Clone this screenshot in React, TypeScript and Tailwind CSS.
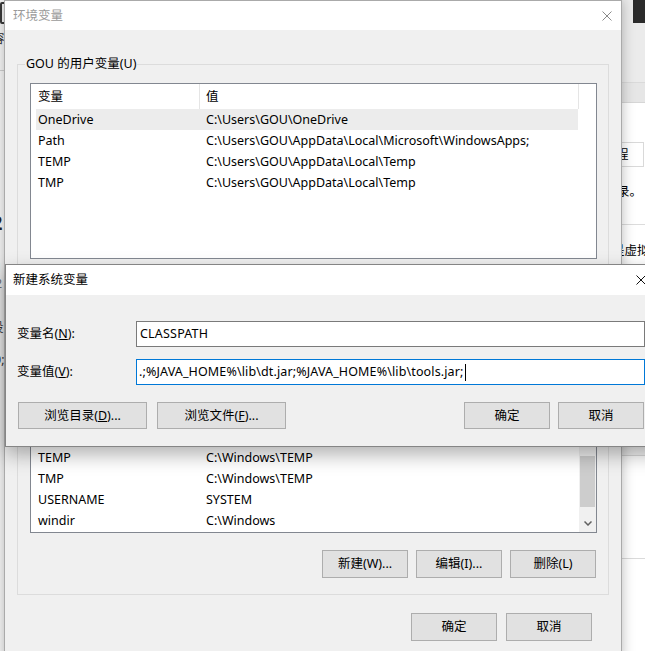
import type { ReactNode } from 'react'

// variable tables shown in the two list views
const userVars: [string, string][] = [
  ['OneDrive', 'C:\\Users\\GOU\\OneDrive'],
  ['Path', 'C:\\Users\\GOU\\AppData\\Local\\Microsoft\\WindowsApps;'],
  ['TEMP', 'C:\\Users\\GOU\\AppData\\Local\\Temp'],
  ['TMP', 'C:\\Users\\GOU\\AppData\\Local\\Temp'],
]

const systemVars: [string, string][] = [
  ['ComSpec', 'C:\\Windows\\system32\\cmd.exe'],
  ['DriverData', 'C:\\Windows\\System32\\Drivers\\DriverData'],
  ['NUMBER_OF_PROCESSORS', '8'],
  ['OS', 'Windows_NT'],
  ['Path', 'C:\\Windows\\system32;C:\\Windows;C:\\Windows\\System32\\Wbem;'],
  ['PATHEXT', '.COM;.EXE;.BAT;.CMD;.VBS;.VBE;.JS;.JSE;.WSF;.WSH;.MSC'],
  ['PROCESSOR_ARCHITECTURE', 'AMD64'],
  ['PSModulePath', '%ProgramFiles%\\WindowsPowerShell\\Modules;'],
  ['TEMP', 'C:\\Windows\\TEMP'],
  ['TMP', 'C:\\Windows\\TEMP'],
  ['USERNAME', 'SYSTEM'],
  ['windir', 'C:\\Windows'],
]

function CloseGlyph({ color }: { color: string }) {
  return (
    <svg width="10" height="10" viewBox="0 0 10 10" className="block">
      <path d="M0.5 0.5 L9.5 9.5 M9.5 0.5 L0.5 9.5" stroke={color} strokeWidth="1" fill="none" />
    </svg>
  )
}

function WinButton({ children, className = '' }: { children: ReactNode, className?: string }) {
  return (
    <div className={`flex shrink-0 items-center justify-center whitespace-nowrap border border-[#adadad] bg-[#e1e1e1] ${className}`}>
      {children}
    </div>
  )
}

function ListHeader() {
  return (
    <div className="flex h-[25px] w-[548px] shrink-0">
      <div className="flex w-[169px] items-center border-r border-[#e5e5e5] pl-[7px]">变量</div>
      <div className="flex w-[379px] items-center border-r border-[#e5e5e5] pl-[6px]">值</div>
    </div>
  )
}

function ListRow({ name, value, selected }: { name: string, value: string, selected?: boolean }) {
  return (
    <div className={`flex h-[21px] w-[542px] shrink-0 items-center whitespace-nowrap ${selected ? 'bg-[#ececec]' : ''}`}>
      <div className="w-[164px] overflow-hidden pl-[2px]">{name}</div>
      <div className="flex-1 overflow-hidden pl-[6px]">{value}</div>
    </div>
  )
}

function Backdrop() {
  return (
    <div className="absolute inset-0 flex">
      {/* sliver of the window behind, left side */}
      <div className="flex w-[4px] flex-col overflow-hidden bg-[#f7f7f7] text-[#333]">
        <div className="mt-[2px] h-[22px] w-[6px] shrink-0 rounded-l-[2px] border-2 border-[#3a3a3a]" />
        <div className="mt-[8px] -ml-[8px] shrink-0 leading-[14px]">容</div>
        <div className="mt-[24px] h-[1px] w-full shrink-0 bg-[#d0d0d0]" />
        <div className="mt-[140px] -ml-[9px] shrink-0 text-[20px] font-bold leading-[24px] text-[#222]">2</div>
        <div className="mt-[26px] -ml-[5px] shrink-0 leading-[14px]">1</div>
        <div className="mt-[2px] -ml-[5px] shrink-0 leading-[14px] text-[#777]">2</div>
        <div className="mt-[30px] -ml-[9px] shrink-0 leading-[14px]">设</div>
        <div className="mt-[18px] -ml-[6px] shrink-0 leading-[14px]">0;</div>
      </div>
      <div className="flex-1" />
      {/* sliver of the window behind, right side */}
      <div className="flex w-[23px] flex-col overflow-hidden bg-white">
        <div className="flex h-[103px] shrink-0 flex-col border-b border-[#d6d6d6] bg-[#ebebeb]">
          <div className="flex justify-end">
            <div className="h-[23px] w-[12px] bg-[#2b2b2b]" />
          </div>
          <div className="mt-auto h-[20px] border-t border-[#dadada] bg-[#e6e6e6]" />
        </div>
        <div className="mt-[39px] flex h-[25px] w-[22px] shrink-0 items-center overflow-hidden border border-l-0 border-[#d9d9d9]">
          <span className="-ml-[6px]">程</span>
        </div>
        <div className="mt-[17px] -ml-[5px] shrink-0 whitespace-nowrap">录。</div>
        <div className="mt-[24px] h-[1px] shrink-0 bg-[#dcdcdc]" />
        <div className="mt-[18px] -ml-[10px] shrink-0 whitespace-nowrap">是虚拟</div>
        <div className="mt-[178px] h-[19px] shrink-0 border-b border-[#dadada] bg-[#f4f4f4]" />
        <div className="mt-[102px] h-[1px] shrink-0 bg-[#dadada]" />
      </div>
    </div>
  )
}

function EnvironmentDialog() {
  return (
    <div className="absolute left-[4px] top-0 flex h-[660px] w-[618px] flex-col border border-[#aaaaaa] bg-[#f0f0f0] shadow-[0_0_12px_rgba(0,0,0,0.28)]">
      <div className="flex h-[29px] shrink-0 items-center justify-between bg-white pl-[8px]">
        <span className="text-[#9a9a9a]">环境变量</span>
        <div className="flex h-full w-[28px] items-center justify-center">
          <CloseGlyph color="#8a8a8a" />
        </div>
      </div>

      <div className="flex flex-col px-[12px]">
        <fieldset className="mt-[26px] border border-[#dcdcdc]">
          <legend className="ml-[7px] px-[1px] leading-[16px]">GOU 的用户变量(U)</legend>
          <div className="flex flex-col pb-[9px] pl-[12px] pr-[11px]">
            <div className="mt-[11px] flex h-[176px] flex-col border border-[#828790] bg-white">
              <ListHeader />
              <div className="ml-[5px] flex flex-col">
                {userVars.map(([name, value], i) => (
                  <ListRow key={name + i} name={name} value={value} selected={i === 0} />
                ))}
              </div>
            </div>
            <div className="mt-[10px] flex justify-end gap-[8px] pr-[1px]">
              <WinButton className="h-[28px] w-[86px]">新建(N)...</WinButton>
              <WinButton className="h-[28px] w-[86px]">编辑(E)...</WinButton>
              <WinButton className="h-[28px] w-[86px]">删除(D)</WinButton>
            </div>
          </div>
        </fieldset>

        <fieldset className="mt-[8px] border border-[#dcdcdc]">
          <legend className="ml-[7px] px-[1px] leading-[16px]">系统变量(S)</legend>
          <div className="flex flex-col pb-[16px] pl-[12px] pr-[11px]">
            <div className="mt-[11px] flex h-[191px] border border-[#828790] bg-white">
              <div className="flex min-w-0 flex-1 flex-col">
                <ListHeader />
                <div className="ml-[5px] flex min-h-0 flex-1 flex-col justify-end overflow-hidden pb-[1px]">
                  {systemVars.map(([name, value]) => (
                    <ListRow key={name} name={name} value={value} />
                  ))}
                </div>
              </div>
              {/* vertical scrollbar, scrolled to the end */}
              <div className="flex w-[17px] shrink-0 flex-col bg-[#f0f0f0]">
                <div className="h-[17px] shrink-0" />
                <div className="flex flex-1 flex-col justify-end px-[1px] pb-[8px]">
                  <div className="h-[51px] bg-[#cdcdcd]" />
                </div>
                <div className="flex h-[17px] shrink-0 items-center justify-center">
                  <svg width="8" height="5" viewBox="0 0 8 5" className="block">
                    <path d="M0.5 0.5 L4 4 L7.5 0.5" stroke="#606060" strokeWidth="1.5" fill="none" />
                  </svg>
                </div>
              </div>
            </div>
            <div className="mt-[17px] flex justify-end gap-[8px] pr-[1px]">
              <WinButton className="h-[28px] w-[86px]">新建(W)...</WinButton>
              <WinButton className="h-[28px] w-[86px]">编辑(I)...</WinButton>
              <WinButton className="h-[28px] w-[86px]">删除(L)</WinButton>
            </div>
          </div>
        </fieldset>

        <div className="mt-[18px] flex justify-end gap-[9px] pr-[17px]">
          <WinButton className="h-[28px] w-[86px]">确定</WinButton>
          <WinButton className="h-[28px] w-[86px]">取消</WinButton>
        </div>
      </div>
    </div>
  )
}

function NewVariableDialog() {
  return (
    <div className="absolute left-[5px] top-[264px] flex h-[183px] w-[660px] flex-col border border-[#858585] bg-[#f0f0f0] shadow-[0_8px_18px_rgba(0,0,0,0.3)]">
      <div className="flex h-[30px] shrink-0 items-center justify-between bg-white pl-[7px]">
        <span>新建系统变量</span>
        <div className="flex h-full w-[46px] items-center justify-center">
          <CloseGlyph color="#111111" />
        </div>
      </div>

      <div className="flex flex-col pl-[11px] pr-[19px]">
        <div className="mt-[26px] flex items-center">
          <span className="w-[119px] shrink-0">变量名(<u>N</u>):</span>
          <div className="flex h-[26px] flex-1 items-center whitespace-nowrap border border-[#7a7a7a] bg-white pl-[3px] tracking-[0.2px]">
            CLASSPATH
          </div>
        </div>
        <div className="mt-[12px] flex items-center">
          <span className="w-[119px] shrink-0">变量值(<u>V</u>):</span>
          <div className="flex h-[26px] flex-1 items-center whitespace-nowrap border border-[#0078d7] bg-white pl-[2px]">
            <span className="tracking-[0.13px]">.;%JAVA_HOME%\lib\dt.jar;%JAVA_HOME%\lib\tools.jar;</span>
            <span className="ml-[1px] inline-block h-[17px] w-[1px] bg-black" />
          </div>
        </div>
        <div className="mt-[17px] flex h-[27px] items-stretch pl-[1px] pr-[1px]">
          <WinButton className="w-[129px]">浏览目录(<u>D</u>)...</WinButton>
          <WinButton className="ml-[10px] w-[129px]">浏览文件(<u>F</u>)...</WinButton>
          <div className="flex-1" />
          <WinButton className="w-[86px]">确定</WinButton>
          <WinButton className="ml-[8px] w-[86px]">取消</WinButton>
        </div>
      </div>
    </div>
  )
}

export default function App() {
  return (
    <div className="relative h-[651px] w-[645px] overflow-hidden bg-white font-['Noto_Sans','Noto_Sans_CJK_SC',sans-serif] text-[12.5px] leading-[16px] text-black">
      <Backdrop />
      <EnvironmentDialog />
      <NewVariableDialog />
    </div>
  )
}
